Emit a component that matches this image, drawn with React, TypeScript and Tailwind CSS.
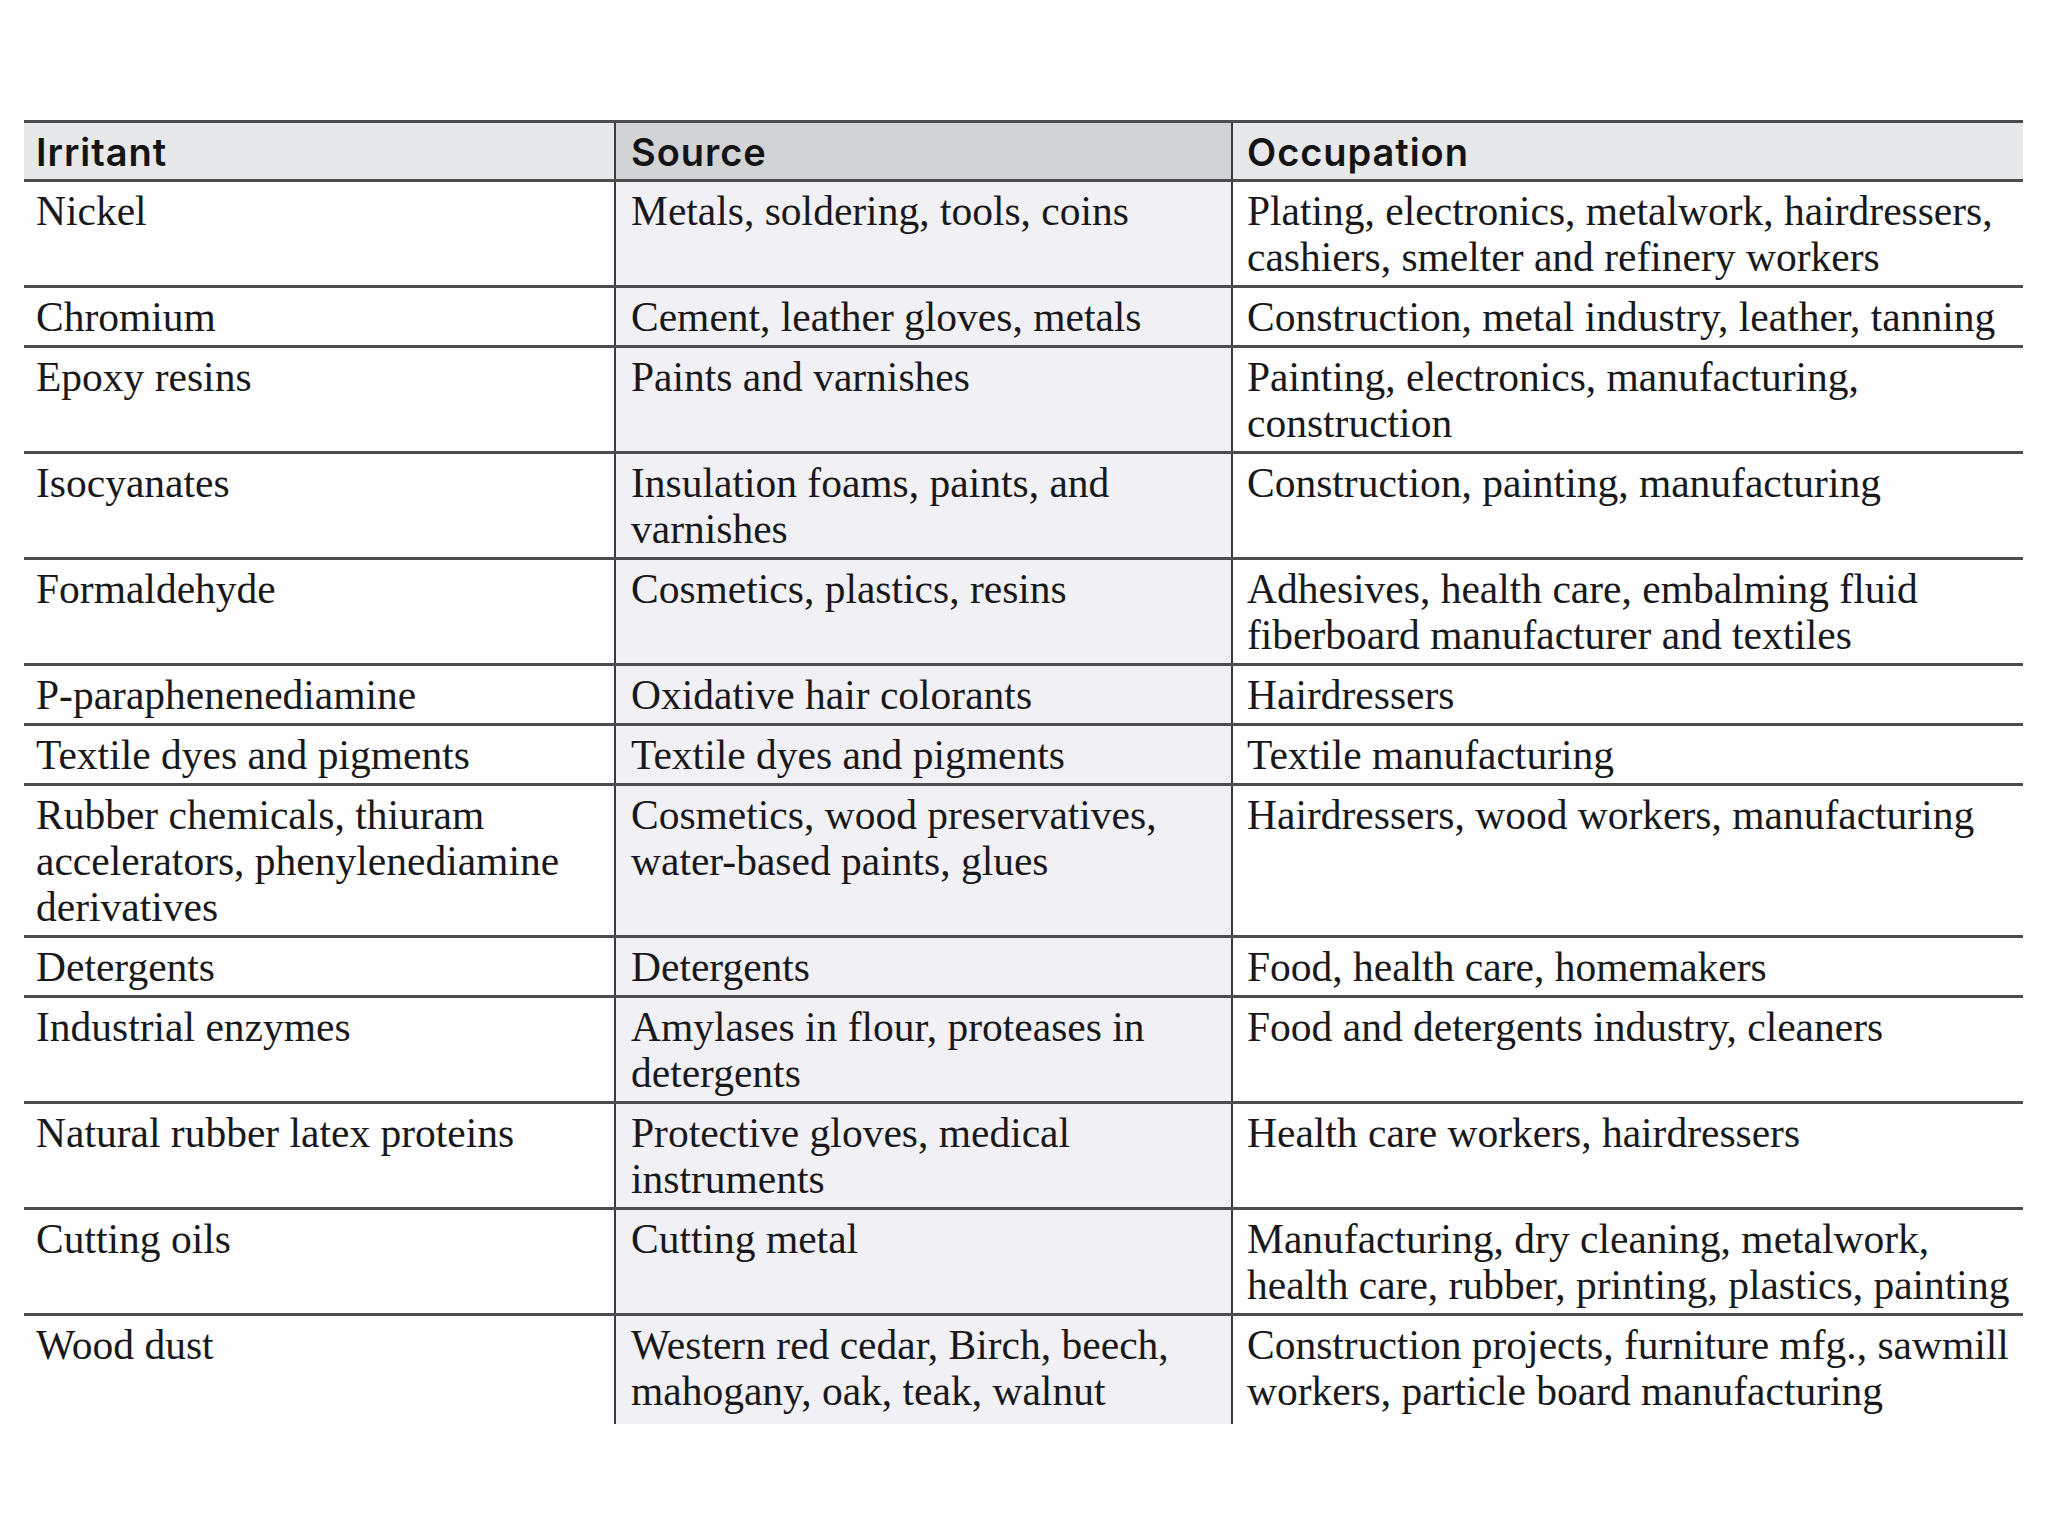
const rows: { irritant: string[]; source: string[]; occupation: string[] }[] = [
  {
    irritant: ["Nickel"],
    source: ["Metals, soldering, tools, coins"],
    occupation: ["Plating, electronics, metalwork, hairdressers,", "cashiers, smelter and refinery workers"],
  },
  {
    irritant: ["Chromium"],
    source: ["Cement, leather gloves, metals"],
    occupation: ["Construction, metal industry, leather, tanning"],
  },
  {
    irritant: ["Epoxy resins"],
    source: ["Paints and varnishes"],
    occupation: ["Painting, electronics, manufacturing,", "construction"],
  },
  {
    irritant: ["Isocyanates"],
    source: ["Insulation foams, paints, and", "varnishes"],
    occupation: ["Construction, painting, manufacturing"],
  },
  {
    irritant: ["Formaldehyde"],
    source: ["Cosmetics, plastics, resins"],
    occupation: ["Adhesives, health care, embalming fluid", "fiberboard manufacturer and textiles"],
  },
  {
    irritant: ["P-paraphenenediamine"],
    source: ["Oxidative hair colorants"],
    occupation: ["Hairdressers"],
  },
  {
    irritant: ["Textile dyes and pigments"],
    source: ["Textile dyes and pigments"],
    occupation: ["Textile manufacturing"],
  },
  {
    irritant: ["Rubber chemicals, thiuram", "accelerators, phenylenediamine", "derivatives"],
    source: ["Cosmetics, wood preservatives,", "water-based paints, glues"],
    occupation: ["Hairdressers, wood workers, manufacturing"],
  },
  {
    irritant: ["Detergents"],
    source: ["Detergents"],
    occupation: ["Food, health care, homemakers"],
  },
  {
    irritant: ["Industrial enzymes"],
    source: ["Amylases in flour, proteases in", "detergents"],
    occupation: ["Food and detergents industry, cleaners"],
  },
  {
    irritant: ["Natural rubber latex proteins"],
    source: ["Protective gloves, medical", "instruments"],
    occupation: ["Health care workers, hairdressers"],
  },
  {
    irritant: ["Cutting oils"],
    source: ["Cutting metal"],
    occupation: ["Manufacturing, dry cleaning, metalwork,", "health care, rubber, printing, plastics, painting"],
  },
  {
    irritant: ["Wood dust"],
    source: ["Western red cedar, Birch, beech,", "mahogany, oak, teak, walnut"],
    occupation: ["Construction projects, furniture mfg., sawmill", "workers, particle board manufacturing"],
  },
];

function Lines({ lines }: { lines: string[] }) {
  return (
    <>
      {lines.map((line, i) => (
        <div key={i} className="whitespace-nowrap">
          {line}
        </div>
      ))}
    </>
  );
}

export default function App() {
  return (
    <div className="min-h-[1536px] w-[2048px] bg-[#fefefe] pl-[24px] pt-[120px]">
      <div className="w-[1999px] text-[#19191b]">
        <div className="flex h-[62px] border-y-[3px] border-[#4d4d4f] font-['Inter',sans-serif] text-[38px] font-semibold leading-[58px] tracking-[0.025em] text-[#141416]">
          <div className="w-[590px] bg-[#e7e8ea] pl-[12px]">Irritant</div>
          <div className="w-[617px] border-l-2 border-[#3a3a3c] bg-[#d2d3d5] pl-[15px]">Source</div>
          <div className="flex-1 border-l-2 border-[#3a3a3c] bg-[#e7e8ea] pl-[14px]">Occupation</div>
        </div>
        {rows.map((row, i) => {
          const last = i === rows.length - 1;
          return (
            <div
              key={row.irritant[0]}
              className={
                last
                  ? "flex font-['Liberation_Serif',serif] text-[41.5px] leading-[46px]"
                  : "flex border-b-[3px] border-[#4d4d4f] font-['Liberation_Serif',serif] text-[41.5px] leading-[46px]"
              }
            >
              <div className={last ? "w-[590px] pb-[10px] pl-[12px] pt-[6px]" : "w-[590px] pb-[5px] pl-[12px] pt-[6px]"}>
                <Lines lines={row.irritant} />
              </div>
              <div
                className={
                  last
                    ? "w-[617px] border-l-2 border-[#3a3a3c] bg-[#f1f0f4] pb-[10px] pl-[15px] pt-[6px]"
                    : "w-[617px] border-l-2 border-[#3a3a3c] bg-[#f1f0f4] pb-[5px] pl-[15px] pt-[6px]"
                }
              >
                <Lines lines={row.source} />
              </div>
              <div
                className={
                  last
                    ? "flex-1 border-l-2 border-[#3a3a3c] pb-[10px] pl-[14px] pt-[6px]"
                    : "flex-1 border-l-2 border-[#3a3a3c] pb-[5px] pl-[14px] pt-[6px]"
                }
              >
                <Lines lines={row.occupation} />
              </div>
            </div>
          );
        })}
      </div>
    </div>
  );
}
